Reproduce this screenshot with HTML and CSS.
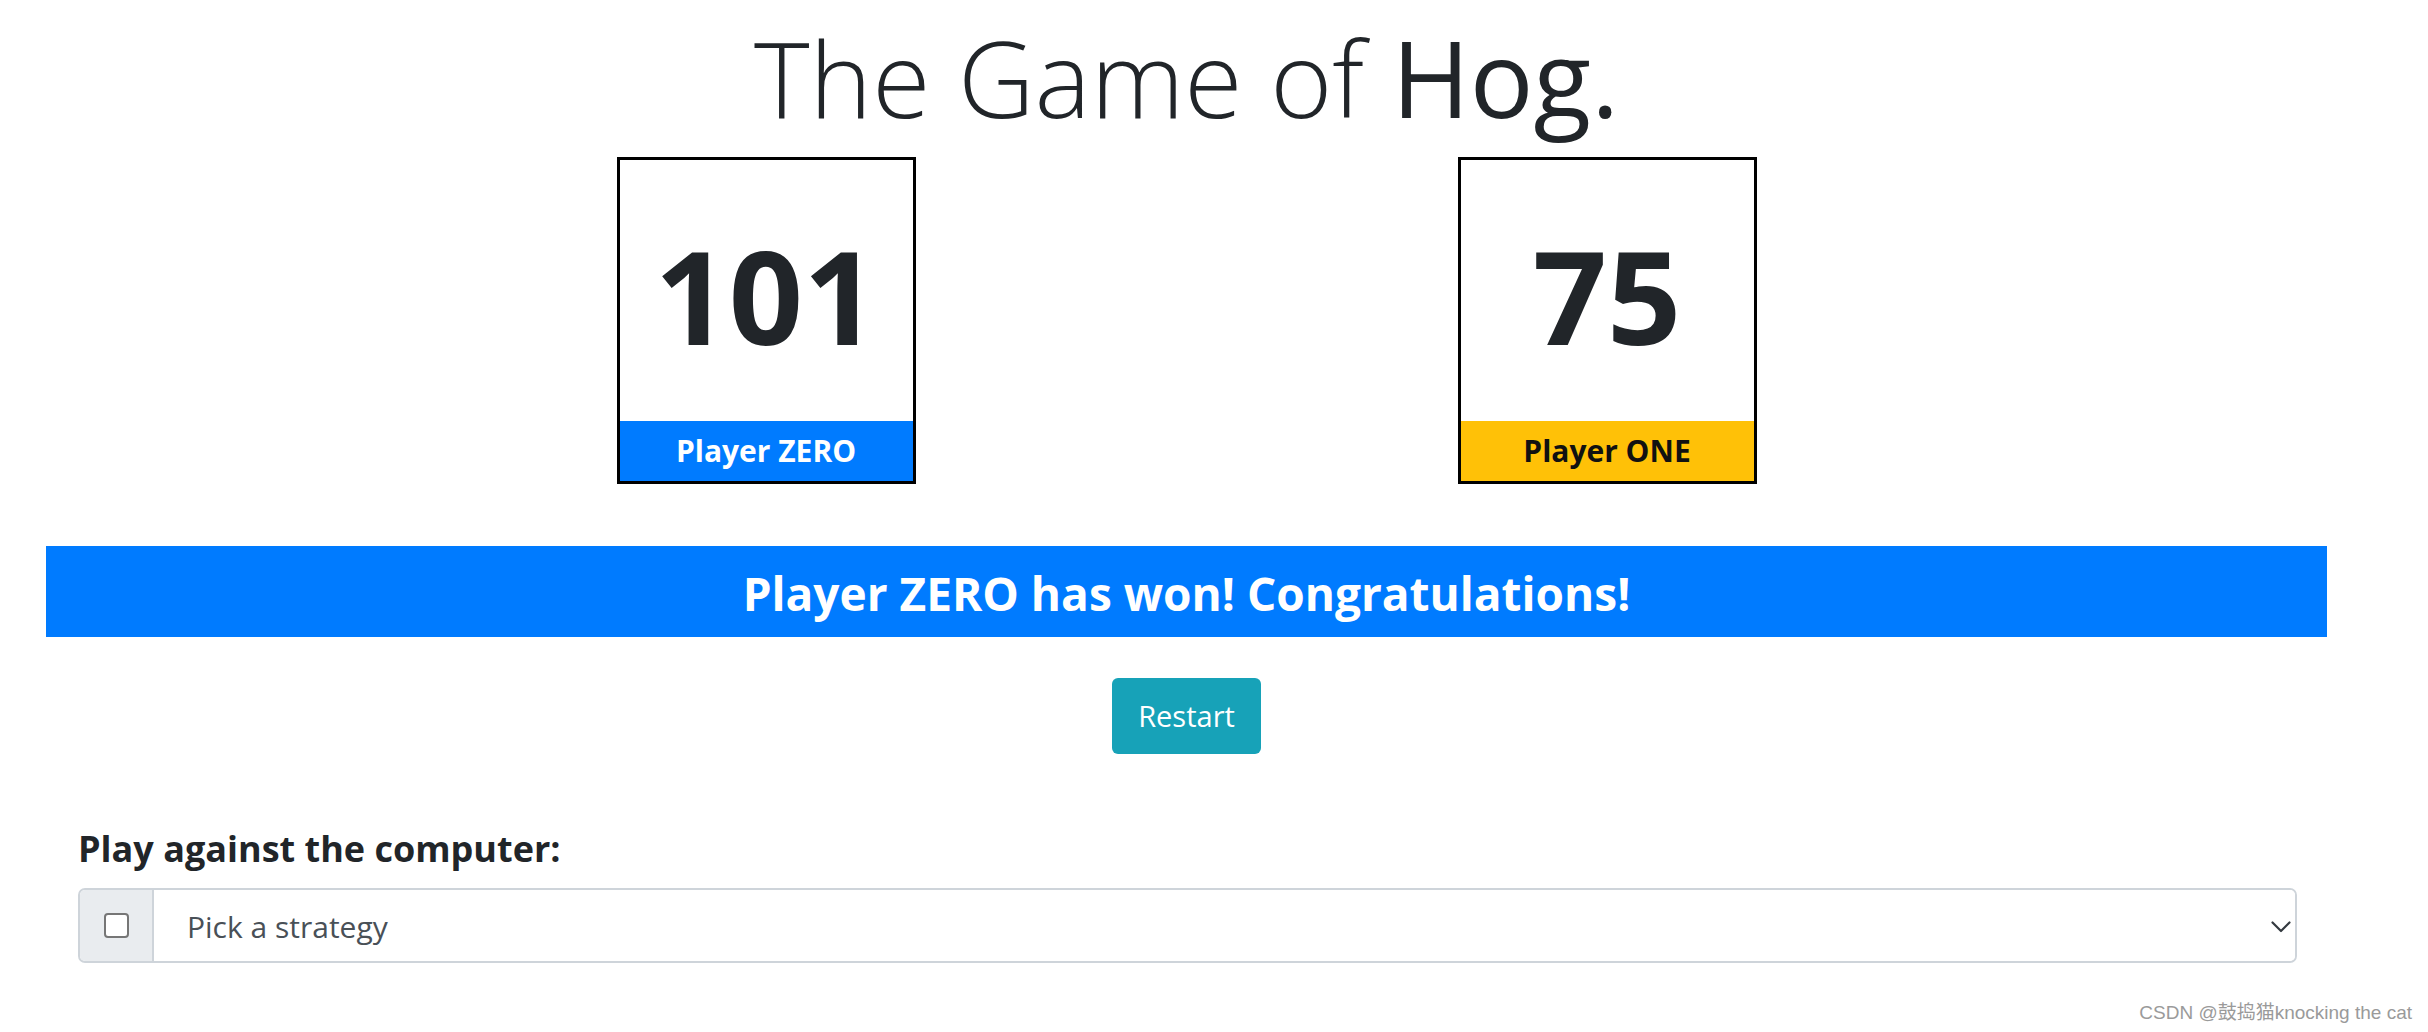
FILE: index.html
```html
<!DOCTYPE html>
<html lang="en">
<head>
<meta charset="utf-8">
<title>The Game of Hog</title>
<link rel="stylesheet" href="styles.css">
</head>
<body>
<div class="page">
  <h1 class="title">The Game of <span class="hog">Hog.</span></h1>

  <div class="scores">
    <div class="score-box">
      <div class="score">101</div>
      <div class="player player-zero">Player ZERO</div>
    </div>
    <div class="score-box">
      <div class="score">75</div>
      <div class="player player-one">Player ONE</div>
    </div>
  </div>

  <div class="banner">Player ZERO has won! Congratulations!</div>

  <div class="actions">
    <button class="restart" type="button">Restart</button>
  </div>

  <div class="computer">
    <label class="computer-label" for="strategy">Play against the computer:</label>
    <div class="input-group">
      <div class="addon"><input class="check" type="checkbox" aria-label="enable computer"></div>
      <div class="select-wrap">
        <select id="strategy" class="select">
          <option>Pick a strategy</option>
        </select>
        <svg class="chevron" width="20" height="12" viewBox="0 0 20 12" aria-hidden="true">
          <path d="M1.5 1.5 L10 10 L18.5 1.5" fill="none" stroke="#343a40" stroke-width="2.2" stroke-linecap="round" stroke-linejoin="round"/>
        </svg>
      </div>
    </div>
  </div>
</div>
<div class="watermark">CSDN @鼓捣猫knocking the cat</div>
</body>
</html>
```

FILE: styles.css
```css
html, body {
  margin: 0;
  padding: 0;
  background: #ffffff;
}

body {
  font-family: "Open Sans", "Noto Sans", sans-serif;
  color: #212529;
}

.page {
  width: 2281px;
  margin-left: 46px;
}

.title {
  margin: 0;
  padding-top: 12px;
  height: 143px;
  box-sizing: border-box;
  font-size: 106px;
  line-height: 131px;
  font-weight: 300;
  text-align: center;
  color: #212529;
}

.hog {
  font-weight: 400;
}

.scores {
  margin-top: 14px;
  display: flex;
  justify-content: center;
  gap: 542px;
}

.score-box {
  width: 299px;
  height: 327px;
  box-sizing: border-box;
  border: 3px solid #000;
  display: flex;
  flex-direction: column;
  background: #fff;
}

.score {
  flex: 1;
  display: flex;
  align-items: center;
  justify-content: center;
  padding-top: 8px;
  font-size: 130px;
  line-height: 1;
  font-weight: 700;
  color: #212529;
}

.player {
  height: 60px;
  display: flex;
  align-items: center;
  justify-content: center;
  font-size: 30px;
  font-weight: 700;
  line-height: 1;
}

.player-zero {
  background: #007bff;
  color: #fff;
}

.player-one {
  background: #ffc107;
  color: #111;
}

.banner {
  margin-top: 62px;
  height: 91px;
  box-sizing: border-box;
  padding-top: 3px;
  background: #007bff;
  color: #fff;
  text-align: center;
  font-size: 46px;
  line-height: 88px;
  font-weight: 700;
}

.actions {
  margin-top: 41px;
  display: flex;
  justify-content: center;
}

.restart {
  height: 76px;
  padding: 0 26px;
  border: none;
  border-radius: 6px;
  background: #17a2b8;
  color: #fff;
  font-family: "Open Sans", "Noto Sans", sans-serif;
  font-size: 29px;
  line-height: 76px;
  font-weight: 400;
}

.computer {
  margin-top: 73px;
  padding: 0 30px 0 32px;
}

.computer-label {
  display: block;
  font-size: 36px;
  line-height: 43px;
  font-weight: 700;
  color: #212529;
}

.input-group {
  margin-top: 18px;
  height: 75px;
  box-sizing: border-box;
  border: 2px solid #ced4da;
  border-radius: 7px;
  display: flex;
  overflow: hidden;
}

.addon {
  width: 74px;
  box-sizing: border-box;
  background: #e9ecef;
  border-right: 2px solid #ced4da;
  display: flex;
  align-items: center;
  justify-content: center;
}

.check {
  appearance: none;
  -webkit-appearance: none;
  margin: 0;
  width: 25px;
  height: 25px;
  box-sizing: border-box;
  border: 2px solid #767676;
  border-radius: 4px;
  background: #fff;
}

.select-wrap {
  flex: 1;
  position: relative;
  display: flex;
}

.select {
  flex: 1;
  appearance: none;
  -webkit-appearance: none;
  border: none;
  outline: none;
  background: #fff;
  margin: 0;
  padding: 2px 0 0 33px;
  font-family: "Open Sans", "Noto Sans", sans-serif;
  font-size: 30px;
  color: #495057;
}

.chevron {
  position: absolute;
  right: 4px;
  top: 31px;
  pointer-events: none;
}

.watermark {
  margin-top: 39px;
  padding-right: 16px;
  text-align: right;
  font-family: "Liberation Sans", Arial, "Noto Sans CJK SC", sans-serif;
  font-size: 19px;
  line-height: 22px;
  color: #9a9a9a;
}
```
